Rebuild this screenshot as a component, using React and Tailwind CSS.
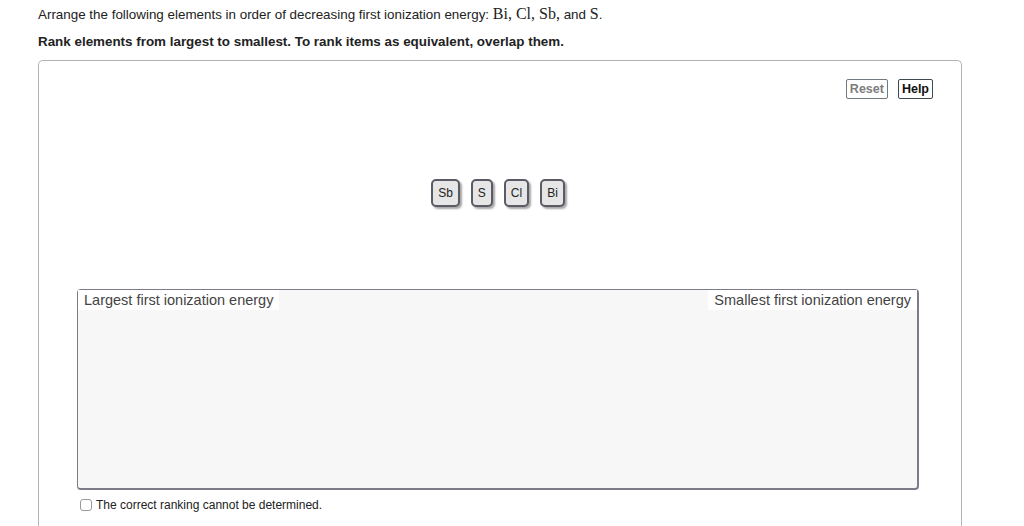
import React, { useState } from 'react';

const tiles = ['Sb', 'S', 'Cl', 'Bi'];

function Tile({ label }) {
  return (
    <div className="h-[28px] px-[5px] min-w-[19px] flex items-center justify-center rounded-[5px] border-2 border-[#5b5b66] bg-[#e6e6e6] text-[12px] text-[#222] shadow-[2px_2px_2px_rgba(0,0,0,0.35)]">
      {label}
    </div>
  );
}

export default function App() {
  const [checked, setChecked] = useState(false);

  return (
    <div className="w-[1024px] h-[526px] overflow-hidden bg-white font-['Liberation_Sans',Arial,sans-serif] text-[#222]">
      <div className="pl-[38px] pt-[6px]">
        <p className="text-[13.4px] leading-[16px]">
          Arrange the following elements in order of decreasing first ionization energy:{' '}
          <span className="font-['Liberation_Serif',serif] text-[16px]">Bi, Cl, Sb,</span> and{' '}
          <span className="font-['Liberation_Serif',serif] text-[16px]">S</span>.
        </p>
        <p className="mt-[11px] text-[13.4px] leading-[16px] font-bold">
          Rank elements from largest to smallest. To rank items as equivalent, overlap them.
        </p>
      </div>

      {/* Outer widget */}
      <div className="ml-[38px] mt-[10px] w-[924px] h-[480px] border border-[#b3b3b3] border-b-0 rounded-t-[5px] flex flex-col">
        <div className="flex justify-end gap-[10px] pr-[28px] pt-[18px]">
          <button className="h-[20px] px-[3px] border border-[#6f7b80] rounded-[2px] text-[12.5px] font-bold text-[#7d7d7d] leading-none">
            Reset
          </button>
          <button className="h-[20px] px-[3px] border border-[#3d4a50] rounded-[2px] text-[12.5px] font-bold text-[#111] leading-none">
            Help
          </button>
        </div>

        <div className="flex justify-center gap-[11px] mt-[80px] pr-[4px]">
          {tiles.map((t) => (
            <Tile key={t} label={t} />
          ))}
        </div>

        {/* Ranking area */}
        <div className="ml-[38px] mt-[82px] w-[842px] h-[201px] rounded-[4px] border-2 border-t border-l border-[#7b7b8a] bg-[#f7f7f7] flex justify-between items-start">
          <span className="bg-white px-[6px] h-[20px] leading-[20px] text-[14.5px] text-[#444]">
            Largest first ionization energy
          </span>
          <span className="bg-white px-[6px] h-[20px] leading-[20px] text-[14.5px] text-[#444]">
            Smallest first ionization energy
          </span>
        </div>

        <label className="ml-[41px] mt-[6px] flex items-center gap-[4px] text-[12px] text-[#222]">
          <span
            onClick={() => setChecked(!checked)}
            className="w-[12px] h-[12px] rounded-[3px] border border-[#9a9a9a] bg-white"
          />
          The correct ranking cannot be determined.
        </label>

        <div className="mt-auto h-[8px] -ml-[38px] w-[740px] bg-gradient-to-b from-white to-[#f3f3f3]" />
      </div>
    </div>
  );
}
